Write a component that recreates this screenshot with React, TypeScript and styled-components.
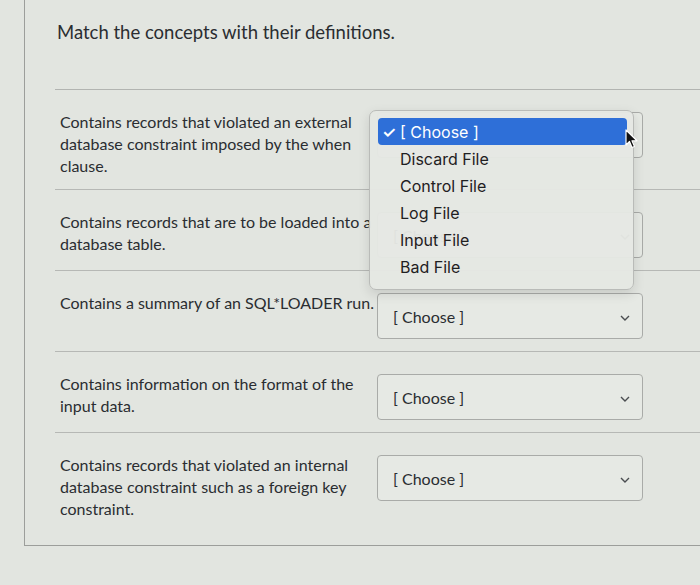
import React from "react";
import styled, { createGlobalStyle } from "styled-components";

const GlobalStyle = createGlobalStyle`
  html, body {
    margin: 0;
    padding: 0;
    background: #e2e5e0;
  }
  body {
    font-family: Lato, "Open Sans", "Liberation Sans", sans-serif;
    color: #2b2f33;
  }
`;

const Page = styled.div`
  width: 700px;
  height: 585px;
  overflow: hidden;
  padding-left: 24px;
  box-sizing: border-box;
  background: #e2e5e0;
`;

const Panel = styled.div`
  width: 720px;
  height: 546px;
  box-sizing: border-box;
  border-left: 1px solid #9c9e9b;
  border-bottom: 1px solid #9c9e9b;
  padding-left: 30px;
`;

const Header = styled.div`
  height: 90px;
  box-sizing: border-box;
  border-bottom: 1px solid #b2b4b1;
  padding: 20px 0 0 2px;
`;

const Title = styled.h2`
  margin: 0;
  font-size: 18.5px;
  line-height: 24px;
  font-weight: 400;
  color: #2a2d31;
`;

const Row = styled.div<{ $last?: boolean }>`
  display: flex;
  align-items: flex-start;
  gap: 3px;
  padding: 21px 0 12px 5px;
  border-bottom: ${({ $last }) => ($last ? "none" : "1px solid #b6b8b5")};
`;

const Definition = styled.div`
  width: 314px;
  font-size: 16px;
  line-height: 22px;
  color: #2a2d31;
`;

const SelectWrap = styled.div`
  position: relative;
  margin-top: 1px;
`;

const SelectBox = styled.div`
  width: 266px;
  height: 46px;
  box-sizing: border-box;
  border: 1px solid #a9aba8;
  border-radius: 4px;
  background: #e6e9e4;
  display: flex;
  align-items: center;
  justify-content: space-between;
  padding: 0 12px 0 15px;
  font-size: 16px;
  color: #2a2d31;
`;

const Chevron = styled.svg`
  width: 10px;
  height: 6px;
  margin-top: 4px;
`;

const Menu = styled.div`
  position: absolute;
  left: -8px;
  top: -2px;
  width: 265px;
  box-sizing: border-box;
  padding: 7px 0 9px;
  background: rgba(229, 231, 227, 0.97);
  border: 1px solid #b9bbb8;
  border-radius: 7px;
  box-shadow: 0 4px 12px rgba(0, 0, 0, 0.12);
  font-family: Inter, "Liberation Sans", sans-serif;
  z-index: 10;
`;

const MenuItem = styled.div<{ $active?: boolean }>`
  display: flex;
  align-items: center;
  height: 27px;
  margin: 0 6px 0 8px;
  padding-left: 4px;
  border-radius: 4px;
  font-size: 16px;
  color: ${({ $active }) => ($active ? "#ffffff" : "#1f2022")};
  background: ${({ $active }) => ($active ? "#2e6fd8" : "transparent")};
`;

const CheckSlot = styled.span`
  width: 18px;
  font-size: 16px;
  font-weight: 600;
`;

const Cursor = styled.svg`
  position: absolute;
  left: 248px;
  top: 17px;
  width: 13px;
  height: 20px;
  z-index: 20;
`;

const rows = [
  "Contains records that violated an external database constraint imposed by the when clause.",
  "Contains records that are to be loaded into a database table.",
  "Contains a summary of an SQL*LOADER run.",
  "Contains information on the format of the input data.",
  "Contains records that violated an internal database constraint such as a foreign key constraint.",
];

const options = ["Discard File", "Control File", "Log File", "Input File", "Bad File"];

const ChevronIcon = () => (
  <Chevron viewBox="0 0 10 6">
    <path d="M1 1 L5 5 L9 1" fill="none" stroke="#4a4d50" strokeWidth="1.4" />
  </Chevron>
);

export default function App() {
  return (
    <Page>
      <GlobalStyle />
      <Panel>
        <Header>
          <Title>Match the concepts with their definitions.</Title>
        </Header>
        {rows.map((text, i) => (
          <Row key={i} $last={i === rows.length - 1}>
            <Definition>{text}</Definition>
            <SelectWrap>
              <SelectBox>
                <span>[ Choose ]</span>
                <ChevronIcon />
              </SelectBox>
              {i === 0 && (
                <>
                  <Menu>
                    <MenuItem $active>
                      <CheckSlot>✓</CheckSlot>[ Choose ]
                    </MenuItem>
                    {options.map((o) => (
                      <MenuItem key={o}>
                        <CheckSlot />
                        {o}
                      </MenuItem>
                    ))}
                  </Menu>
                  <Cursor viewBox="0 0 13 20">
                    <path
                      d="M1 1 L1 16 L4.5 12.5 L7 18.5 L9.5 17.5 L7 11.8 L12 11.8 Z"
                      fill="#111"
                      stroke="#fff"
                      strokeWidth="1.2"
                      strokeLinejoin="round"
                    />
                  </Cursor>
                </>
              )}
            </SelectWrap>
          </Row>
        ))}
      </Panel>
    </Page>
  );
}
